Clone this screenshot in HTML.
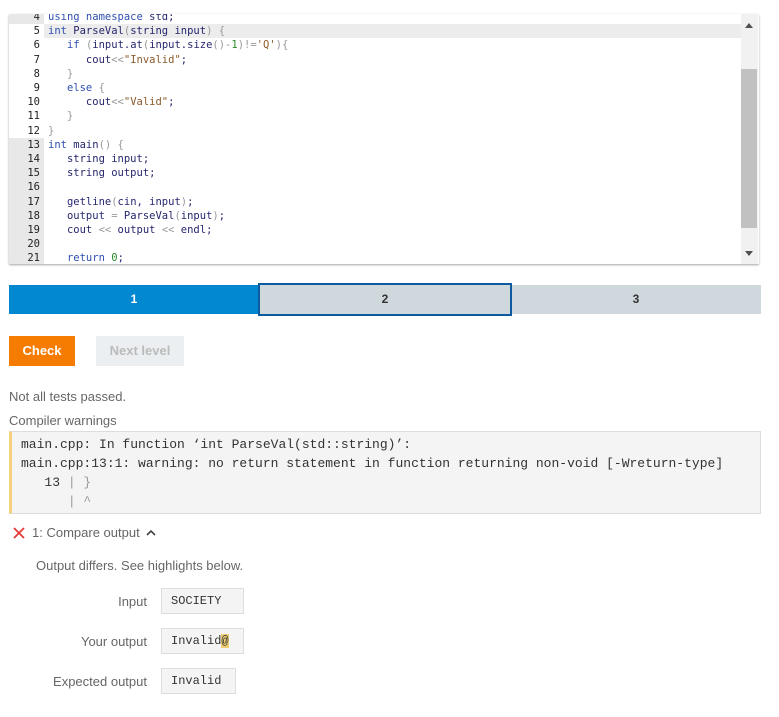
<!DOCTYPE html>
<html><head><style>
*{margin:0;padding:0;box-sizing:border-box}
body{width:779px;height:717px;background:#fff;position:relative;overflow:hidden;font-family:"Liberation Sans",sans-serif;color:#555}
.abs{position:absolute}
#ed{left:9px;top:14px;width:750px;height:250px;overflow:hidden;background:#fff;box-shadow:0 1px 2px rgba(0,0,0,.35)}
.ln{position:absolute;left:0;height:14.2px;width:732px;font-family:"DejaVu Sans Mono",monospace;font-size:10.5px;line-height:14.2px;white-space:pre;color:#26266e}
.g{position:absolute;left:0;width:35px;height:100%;text-align:right;padding-right:4px;color:#222;background:#e8e8e8}
.gw{background:#fff}
.c{position:absolute;left:39px}
.k{color:#2f4fb0}.p{color:#999}.s{color:#8b5a2b}.n{color:#2a8a2a}
.tab{position:absolute;top:285px;height:29px;font:bold 12px "Liberation Sans",sans-serif;text-align:center;line-height:29px}
.mono{font-family:"Liberation Mono",monospace}
.box{position:absolute;left:161px;height:26px;background:#f4f4f4;border:1px solid #ddd;font:12px "Liberation Mono",monospace;color:#333;line-height:24px;padding-left:9px}
.lbl{position:absolute;right:632px;font-size:13px;color:#666}
</style></head><body>
<div id="ed" class="abs">
<div class="ln" style="top:-4px"><div class="g">4</div><div class="c"><span class="k">using namespace</span> std;</div></div>
<div class="ln" style="top:10.2px;background:#ececec"><div class="g gw">5</div><div class="c"><span class="k">int</span> ParseVal<span class="p">(</span>string input<span class="p">) {</span></div></div>
<div class="ln" style="top:24.4px"><div class="g gw">6</div><div class="c">   <span class="k">if</span> <span class="p">(</span>input.at<span class="p">(</span>input.size<span class="p">()-</span><span class="n">1</span><span class="p">)!=</span><span class="s">'Q'</span><span class="p">){</span></div></div>
<div class="ln" style="top:38.6px"><div class="g gw">7</div><div class="c">      cout<span class="p">&lt;&lt;</span><span class="s">"Invalid"</span>;</div></div>
<div class="ln" style="top:52.8px"><div class="g gw">8</div><div class="c">   <span class="p">}</span></div></div>
<div class="ln" style="top:67px"><div class="g gw">9</div><div class="c">   <span class="k">else</span> <span class="p">{</span></div></div>
<div class="ln" style="top:81.2px"><div class="g gw">10</div><div class="c">      cout<span class="p">&lt;&lt;</span><span class="s">"Valid"</span>;</div></div>
<div class="ln" style="top:95.4px"><div class="g gw">11</div><div class="c">   <span class="p">}</span></div></div>
<div class="ln" style="top:109.6px"><div class="g gw">12</div><div class="c"><span class="p">}</span></div></div>
<div class="ln" style="top:123.8px"><div class="g">13</div><div class="c"><span class="k">int</span> main<span class="p">() {</span></div></div>
<div class="ln" style="top:138px"><div class="g">14</div><div class="c">   string input;</div></div>
<div class="ln" style="top:152.2px"><div class="g">15</div><div class="c">   string output;</div></div>
<div class="ln" style="top:166.4px"><div class="g">16</div><div class="c"></div></div>
<div class="ln" style="top:180.6px"><div class="g">17</div><div class="c">   getline<span class="p">(</span>cin, input<span class="p">)</span>;</div></div>
<div class="ln" style="top:194.8px"><div class="g">18</div><div class="c">   output <span class="p">=</span> ParseVal<span class="p">(</span>input<span class="p">)</span>;</div></div>
<div class="ln" style="top:209px"><div class="g">19</div><div class="c">   cout <span class="p">&lt;&lt;</span> output <span class="p">&lt;&lt;</span> endl;</div></div>
<div class="ln" style="top:223.2px"><div class="g">20</div><div class="c"></div></div>
<div class="ln" style="top:237.4px"><div class="g">21</div><div class="c">   <span class="k">return</span> <span class="n">0</span>;</div></div>
<div class="abs" style="left:732px;top:0;width:17px;height:250px;background:#f1f1f1"></div>
<div class="abs" style="left:732px;top:55px;width:16px;height:159px;background:#c1c1c1"></div>
<div class="abs" style="left:736px;top:9px;width:0;height:0;border-left:4px solid transparent;border-right:4px solid transparent;border-bottom:5px solid #505050"></div>
<div class="abs" style="left:736px;top:237px;width:0;height:0;border-left:4px solid transparent;border-right:4px solid transparent;border-top:5px solid #505050"></div>
</div>

<div class="tab" style="left:9px;width:250px;background:#0288d1;color:#fff">1</div>
<div class="tab" style="left:511px;width:250px;background:#cfd8dc;color:#333">3</div>
<div class="tab" style="left:258px;top:283px;width:254px;height:33px;background:#cfd8dc;border:2px solid #0d5a9e;color:#333;line-height:29px">2</div>

<div class="abs" style="left:9px;top:336px;width:66px;height:30px;background:#f57c00;color:#fff;font:bold 13px 'Liberation Sans',sans-serif;text-align:center;line-height:30px">Check</div>
<div class="abs" style="left:96px;top:336px;width:88px;height:30px;background:#eceff1;color:#bbb;font:bold 13px 'Liberation Sans',sans-serif;text-align:center;line-height:30px">Next level</div>

<div class="abs" style="left:9px;top:389px;font-size:13px;color:#666">Not all tests passed.</div>
<div class="abs" style="left:9px;top:413px;font-size:13px;color:#666">Compiler warnings</div>
<div class="abs mono" style="left:9px;top:431px;width:752px;height:83px;background:#f4f4f4;border:1px solid #ddd;border-left:3px solid #f5d17e;font-size:13px;color:#333;line-height:19px;padding:3px 0 0 9px;white-space:pre">main.cpp: In function ‘int ParseVal(std::string)’:
main.cpp:13:1: warning: no return statement in function returning non-void [-Wreturn-type]
   13 <span style="color:#999">| }</span>
      <span style="color:#999">| ^</span></div>

<svg class="abs" style="left:13px;top:527px" width="12" height="12" viewBox="0 0 12 12"><path d="M1 1L11 11M11 1L1 11" stroke="#e53935" stroke-width="1.8"/></svg>
<div class="abs" style="left:32px;top:525px;font-size:13px;color:#666">1: Compare output</div>
<svg class="abs" style="left:146px;top:529px" width="10" height="7" viewBox="0 0 10 7"><path d="M1 6L5 2L9 6" stroke="#444" stroke-width="1.6" fill="none"/></svg>
<div class="abs" style="left:36px;top:558px;font-size:13px;color:#666">Output differs. See highlights below.</div>

<div class="lbl" style="top:594px">Input</div>
<div class="box" style="top:588px;width:83px">SOCIETY</div>
<div class="lbl" style="top:634px">Your output</div>
<div class="box" style="top:628px;width:83px">Invalid<span style="background:#f0cf74">@</span></div>
<div class="lbl" style="top:674px">Expected output</div>
<div class="box" style="top:668px;width:75px">Invalid</div>
</body></html>
